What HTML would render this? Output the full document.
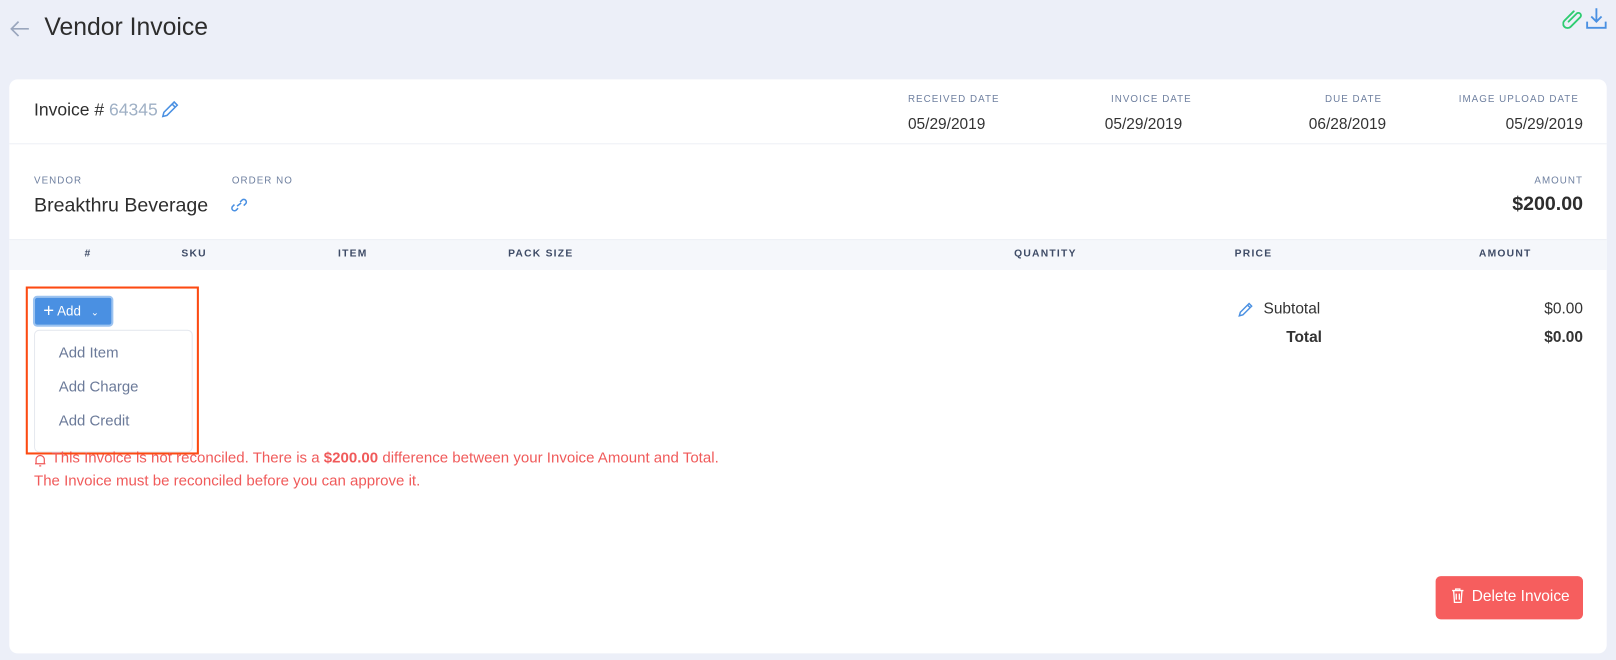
<!DOCTYPE html>
<html><head><meta charset="utf-8"><style>
*{margin:0;padding:0;box-sizing:border-box}
body{width:1616px;height:659px;background:#eceff8;font-family:"Liberation Sans",sans-serif;position:relative;overflow:hidden;color:#2b2b2b}
#w{position:absolute;left:0;top:0;width:1568px;height:640px;transform:scale(1.0306);transform-origin:0 0}
.a{position:absolute;white-space:nowrap}
.lbl{font-size:9.5px;letter-spacing:1px;color:#6f80a0;text-transform:uppercase}
.th{font-size:10px;letter-spacing:1.2px;color:#3e4b66;font-weight:bold}
.d{font-size:15px;color:#333}
.card{position:absolute;left:9px;top:77px;width:1550px;height:557px;background:#fff;border-radius:8px}
.red{color:#f05a5a;font-size:14.6px}
</style></head><body><div id="w">
<svg class="a" style="left:8px;top:19px" width="22" height="18" viewBox="0 0 22 18"><path d="M20 9H3M10 2L3 9l7 7" fill="none" stroke="#9aa6bd" stroke-width="1.6"/></svg>
<div class="a" style="left:43px;top:13px;font-size:24px;color:#2d2d2d">Vendor Invoice</div>
<svg class="a" style="left:1516px;top:6px" width="22" height="22" viewBox="0 0 22 22"><path d="M6 15l8-8a2.5 2.5 0 0 1 3.5 3.5L8 20a4 4 0 0 1-6-6l9-9" fill="none" stroke="#2ecc71" stroke-width="1.8" stroke-linecap="round"/></svg>
<svg class="a" style="left:1538px;top:6px" width="22" height="24" viewBox="0 0 22 24"><path d="M11 2v13M6 10l5 5 5-5M2 15v6h18v-6" fill="none" stroke="#4a90e2" stroke-width="1.8"/></svg>
<div class="card"></div>
<div class="a" style="left:33px;top:97px;font-size:17px;color:#2d2d2d">Invoice # <span style="color:#9fb0c5">64345</span></div>
<svg class="a" style="left:156px;top:97px" width="18" height="18" viewBox="0 0 18 18"><path d="M2 16l1-4L13 2l3 3L6 15zM11 4l3 3" fill="none" stroke="#4a90e2" stroke-width="1.5"/></svg>
<div class="a lbl" style="left:881px;top:91px">Received Date</div>
<div class="a d" style="left:881px;top:112px">05/29/2019</div>
<div class="a lbl" style="left:1078px;top:91px">Invoice Date</div>
<div class="a d" style="left:1072px;top:112px">05/29/2019</div>
<div class="a lbl" style="right:227px;top:91px">Due Date</div>
<div class="a d" style="right:223px;top:112px">06/28/2019</div>
<div class="a lbl" style="right:36px;top:91px">Image Upload Date</div>
<div class="a d" style="right:32px;top:112px">05/29/2019</div>
<div class="a" style="left:9px;top:139px;width:1550px;height:1px;background:#edf0f5"></div>
<div class="a lbl" style="left:33px;top:170px">Vendor</div>
<div class="a" style="left:33px;top:189px;font-size:19px;color:#2d2d2d">Breakthru Beverage</div>
<div class="a lbl" style="left:225px;top:170px">Order No</div>
<svg class="a" style="left:223px;top:191px" width="18" height="16" viewBox="0 0 18 16"><path d="M8 11l-2 2a2.5 2.5 0 0 1-3.5-3.5l2-2M10 5l2-2a2.5 2.5 0 0 1 3.5 3.5l-2 2M7 9l4-3" fill="none" stroke="#4a90e2" stroke-width="1.5"/></svg>
<div class="a lbl" style="right:32px;top:170px">Amount</div>
<div class="a" style="right:32px;top:188px;font-size:19px;font-weight:bold;color:#2d2d2d">$200.00</div>
<div class="a" style="left:9px;top:232px;width:1550px;height:30px;background:#f5f7fb;border-top:1px solid #edf0f5"></div>
<div class="a th" style="left:82px;top:241px">#</div>
<div class="a th" style="left:176px;top:241px">SKU</div>
<div class="a th" style="left:328px;top:241px">ITEM</div>
<div class="a th" style="left:493px;top:241px">PACK SIZE</div>
<div class="a th" style="left:984px;top:241px">QUANTITY</div>
<div class="a th" style="left:1198px;top:241px">PRICE</div>
<div class="a th" style="left:1435px;top:241px">AMOUNT</div>
<div class="a" style="left:25px;top:278px;width:168px;height:163px;border:2px solid #fc4a12"></div>
<div class="a" style="left:32px;top:287px;width:78px;height:30px;background:#4a90e2;border:2px solid #9cc3f0;border-radius:4px;color:#fff;font-size:13px;padding:5px 0 0 8px">
<span style="font-size:18px;position:relative;top:1px;line-height:10px">+</span> Add <span style="font-size:9px;margin-left:6px">&#8964;</span></div>
<div class="a" style="left:33px;top:320px;width:154px;height:119px;border:1px solid #e6e9ef;border-radius:5px"></div>
<div class="a" style="left:57px;top:335px;font-size:14.5px;color:#6b7a99">Add Item</div>
<div class="a" style="left:57px;top:368px;font-size:14.5px;color:#6b7a99">Add Charge</div>
<div class="a" style="left:57px;top:401px;font-size:14.5px;color:#6b7a99">Add Credit</div>
<svg class="a" style="left:33px;top:440px" width="12" height="13" viewBox="0 0 12 13"><path d="M2 10V6a4 4 0 0 1 8 0v4M1 10h10M5 12h2" fill="none" stroke="#f05a5a" stroke-width="1.2"/></svg>
<div class="a red" style="left:50px;top:437px">This Invoice is not reconciled. There is a <b>$200.00</b> difference between your Invoice Amount and Total.</div>
<div class="a red" style="left:33px;top:459px">The Invoice must be reconciled before you can approve it.</div>
<svg class="a" style="left:1201px;top:292px" width="16" height="16" viewBox="0 0 16 16"><path d="M1.5 14.5l1-3.5L11 2.5l2.5 2.5L5 13.5zM9.5 4l2.5 2.5" fill="none" stroke="#4a90e2" stroke-width="1.4"/></svg>
<div class="a" style="left:1226px;top:291px;font-size:15px;color:#333">Subtotal</div>
<div class="a" style="right:32px;top:291px;font-size:15px;color:#333">$0.00</div>
<div class="a" style="left:1248px;top:319px;font-size:15px;font-weight:bold;color:#333">Total</div>
<div class="a" style="right:32px;top:319px;font-size:15px;font-weight:bold;color:#333">$0.00</div>
<div class="a" style="left:1393px;top:559px;width:143px;height:42px;background:#f65e5e;border-radius:5px;color:#fff;font-size:15px;padding:11px 0 0 35px">Delete Invoice</div>
<svg class="a" style="left:1408px;top:570px" width="13" height="16" viewBox="0 0 13 16"><path d="M1 3h11M4.5 3V1.5h4V3M2.5 3.5l.8 11h6.4l.8-11M5 6v6M8 6v6" fill="none" stroke="#fff" stroke-width="1.3"/></svg>
</div></body></html>
